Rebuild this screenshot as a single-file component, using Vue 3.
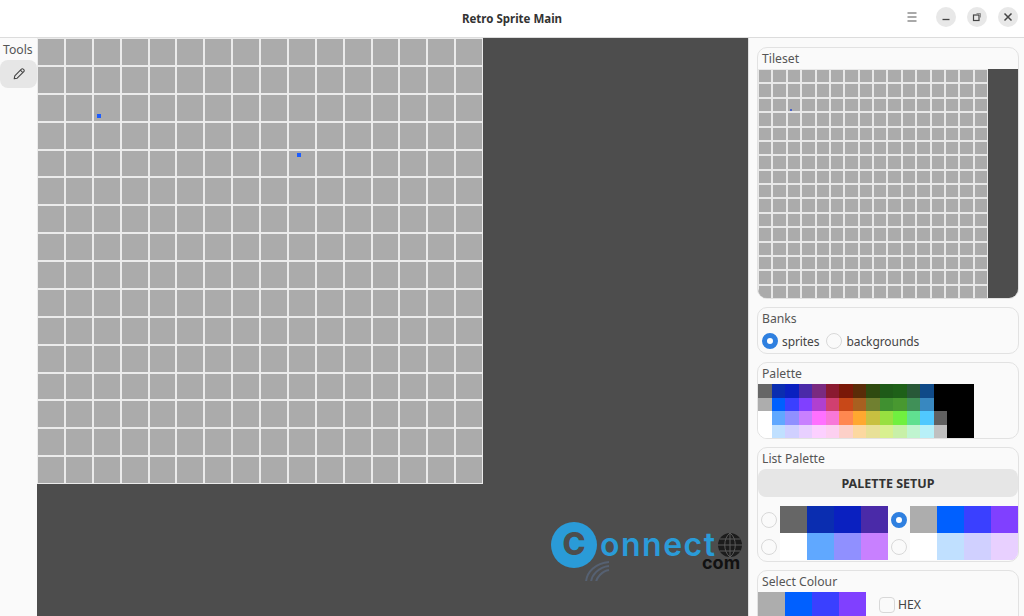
<script setup>
const cells = Array.from({ length: 256 }, (_, i) => i)
const nes = [
  '#666666','#0a2db0','#0a20c0','#4a2aa8','#7a2a80','#8a1a30','#7a1808','#5a2c08','#2f4a10','#1e5a18','#1e6018','#285838','#0f4a88','#000000','#000000','#000000',
  '#adadad','#0060ff','#3a40ff','#8040ff','#b040d0','#d04070','#c84818','#a86020','#708030','#409030','#489830','#409058','#3888c0','#000000','#000000','#000000',
  '#ffffff','#60a8ff','#9090ff','#c880ff','#ff70ff','#f878d8','#ff8850','#ffa830','#c8c040','#98e040','#70f040','#60e090','#50c8ff','#606060','#000000','#000000',
  '#ffffff','#c0e0ff','#d0d0ff','#e8d0ff','#fcd0ff','#fcd0f0','#fcd0c8','#fcd8a0','#e8e098','#d8f090','#c8f0a8','#c0f4d0','#b8f0f8','#c0c0c0','#000000','#000000'
]
const listA = ['#666666', '#0a2db0', '#0a20c0', '#4a2aa8', '#ffffff', '#60a8ff', '#9090ff', '#c880ff']
const listB = ['#adadad', '#0060ff', '#3a40ff', '#8040ff', '#ffffff', '#c0e0ff', '#d0d0ff', '#e8d0ff']
const select = ['#adadad', '#0060ff', '#3a40ff', '#8040ff']
</script>

<template>
  <div class="window">
    <header class="titlebar">
      <div class="title">Retro Sprite Main</div>
      <div class="controls">
        <svg class="menu" width="12" height="12" viewBox="0 0 12 12"><path d="M1.5 2h9M1.5 6h9M1.5 10h9" stroke="#555" stroke-width="1.1" fill="none" /></svg>
        <button class="wbtn first">
          <svg width="10" height="10" viewBox="0 0 10 10"><path d="M1.5 7.5h7" stroke="#444" stroke-width="1.3" /></svg>
        </button>
        <button class="wbtn">
          <svg width="10" height="10" viewBox="0 0 10 10"><rect x="1.5" y="3" width="5.5" height="5.5" fill="none" stroke="#444" stroke-width="1.2" /><path d="M4.5 1.5h4V5.5" fill="none" stroke="#777" stroke-width="0.8" /></svg>
        </button>
        <button class="wbtn">
          <svg width="10" height="10" viewBox="0 0 10 10"><path d="M1.5 1.5l7 7M8.5 1.5l-7 7" stroke="#444" stroke-width="1.5" /></svg>
        </button>
      </div>
    </header>

    <div class="body">
      <aside class="tools">
        <div class="tools-label">Tools</div>
        <button class="tool-btn">
          <svg width="14" height="14" viewBox="0 0 14 14"><path d="M2.2 11.8l.6-3L9.4 2.2a1.3 1.3 0 0 1 1.9 0l.5.5a1.3 1.3 0 0 1 0 1.9L5.2 11.2zM8.4 3.2l2.4 2.4" fill="none" stroke="#444" stroke-width="1.1" stroke-linejoin="round" /></svg>
        </button>
      </aside>

      <main class="stage">
        <div class="sprite-grid">
          <div v-for="c in cells" :key="c" class="sprite-cell">
            <i v-if="c === 34" class="dot dot-a"></i>
            <i v-if="c === 73" class="dot dot-b"></i>
          </div>
        </div>
        <div class="logo">
          <svg class="waves" width="26" height="20" viewBox="0 0 26 20"><path d="M2 22C2 11 12 2 25 1M7 22C7 14 15 6 25 5M12 22C12 17 18 10 25 9" fill="none" stroke="#566172" stroke-width="2" /></svg>
          <div class="logo-circle">C</div>
          <div class="logo-word">onnect</div>
          <svg class="globe" width="26" height="26" viewBox="0 0 26 26">
            <circle cx="13" cy="13" r="12" fill="#1c1c1c" />
            <path d="M1 13h24M2.5 7h21M2.5 19h21M13 1v24M13 1C6 6 6 20 13 25M13 1c7 5 7 19 0 24" fill="none" stroke="#5a5a5a" stroke-width="1" />
          </svg>
          <div class="logo-com">com</div>
        </div>
      </main>

      <aside class="panel">
        <section class="card tileset-card">
          <div class="card-title">Tileset</div>
          <div class="tileset-view">
            <div class="tile-grid">
              <div v-for="c in cells" :key="c" class="tile-cell">
                <i v-if="c === 34" class="tile-dot"></i>
              </div>
            </div>
          </div>
        </section>

        <section class="card banks-card">
          <div class="card-title">Banks</div>
          <div class="radios">
            <span class="radio on"></span><span class="radio-label">sprites</span>
            <span class="radio"></span><span class="radio-label">backgrounds</span>
          </div>
        </section>

        <section class="card palette-card">
          <div class="card-title">Palette</div>
          <div class="palette">
            <div v-for="(col, i) in nes" :key="i" :style="{ background: col }"></div>
          </div>
        </section>

        <section class="card list-card">
          <div class="card-title">List Palette</div>
          <button class="setup">PALETTE SETUP</button>
          <div class="lists">
            <div class="radio-col">
              <span class="radio"></span>
              <span class="radio"></span>
            </div>
            <div class="swatches">
              <div v-for="(col, i) in listA" :key="i" :style="{ background: col }"></div>
            </div>
            <div class="radio-col">
              <span class="radio on"></span>
              <span class="radio"></span>
            </div>
            <div class="swatches">
              <div v-for="(col, i) in listB" :key="i" :style="{ background: col }"></div>
            </div>
          </div>
        </section>

        <section class="card select-card">
          <div class="card-title">Select Colour</div>
          <div class="select-row">
            <div class="select-swatches">
              <div v-for="(col, i) in select" :key="i" :style="{ background: col }"></div>
            </div>
            <span class="check"></span>
            <span class="hex">HEX</span>
          </div>
        </section>
      </aside>
    </div>
  </div>
</template>

<style>
html, body { margin: 0; background: #fafafa; overflow: hidden; }
</style>

<style scoped>
.window {
  width: 1024px;
  height: 616px;
  display: flex;
  flex-direction: column;
  overflow: hidden;
  font-family: "Noto Sans", sans-serif;
  color: #444;
  font-size: 12.2px;
  background: #fafafa;
}
.titlebar {
  height: 37px;
  flex: none;
  display: flex;
  align-items: center;
  justify-content: center;
  position: relative;
  background: #ffffff;
  border-bottom: 1px solid #dcdcdc;
}
.title {
  font-weight: 700;
  font-size: 11.5px;
  color: #333;
}
.controls {
  position: absolute;
  right: 6px;
  top: 7px;
  display: flex;
  align-items: center;
  gap: 11px;
}
.menu { margin-right: 7px; }
.wbtn {
  width: 20px;
  height: 20px;
  border-radius: 50%;
  border: none;
  background: #e8e8e8;
  padding: 0;
  display: flex;
  align-items: center;
  justify-content: center;
}
.body {
  flex: 1;
  display: flex;
  min-height: 0;
}
.tools {
  width: 37px;
  flex: none;
  display: flex;
  flex-direction: column;
  background: #fafafa;
}
.tools-label {
  height: 22px;
  line-height: 24px;
  padding-left: 3px;
  color: #555;
}
.tool-btn {
  width: 37px;
  height: 28px;
  padding: 0;
  border: none;
  border-radius: 8px;
  background: #e6e6e6;
  display: flex;
  align-items: center;
  justify-content: center;
}
.stage {
  width: 711px;
  flex: none;
  position: relative;
  background: #4d4d4d;
}
.sprite-grid {
  width: 446px;
  height: 446px;
  box-sizing: border-box;
  padding: 1px;
  display: grid;
  grid-template-columns: repeat(16, 1fr);
  grid-template-rows: repeat(16, 1fr);
  gap: 2px;
  background: #ebebeb;
}
.sprite-cell {
  background: #ababab;
  position: relative;
}
.dot {
  position: absolute;
  width: 4px;
  height: 4px;
  background: #1b5cff;
}
.dot-a { left: 3px; top: 19px; }
.dot-b { left: 8px; top: 2px; }
.logo {
  position: absolute;
  left: 514px;
  top: 484px;
  width: 195px;
  height: 62px;
}
.logo-circle {
  position: absolute;
  left: 0;
  top: 0;
  width: 46px;
  height: 46px;
  border-radius: 50%;
  background: #2a9bd8;
  color: #4d4d4d;
  font: 800 31px/44px "Inter", sans-serif;
  text-align: center;
}
.logo-word {
  position: absolute;
  left: 49px;
  top: 13px;
  color: #2a9bd8;
  font: 600 32px/20px "Inter", sans-serif;
  letter-spacing: 1.5px;
}
.globe {
  position: absolute;
  left: 166px;
  top: 10px;
}
.logo-com {
  position: absolute;
  left: 151px;
  top: 34px;
  color: #111;
  font: 700 18px/14px "Inter", sans-serif;
}
.waves {
  position: absolute;
  left: 33px;
  top: 39px;
}
.panel {
  flex: 1;
  min-width: 0;
  padding: 9px 5px 0 8px;
  border-left: 1px solid #e0e0e0;
  display: flex;
  flex-direction: column;
  gap: 8px;
  background: #fafafa;
  overflow: hidden;
}
.card {
  flex: none;
  box-sizing: border-box;
  border: 1px solid #e2e2e2;
  border-radius: 10px;
  background: #fafafa;
  overflow: hidden;
}
.card-title {
  height: 21px;
  line-height: 22px;
  padding-left: 4px;
  color: #555;
}
.tileset-card { height: 252px; }
.tileset-view {
  height: 230px;
  background: #4d4d4d;
}
.tile-grid {
  width: 230px;
  height: 230px;
  box-sizing: border-box;
  padding: 1px;
  display: grid;
  grid-template-columns: repeat(16, 1fr);
  grid-template-rows: repeat(16, 1fr);
  gap: 2px;
  background: #e8e8e8;
}
.tile-cell {
  background: #ababab;
  position: relative;
}
.tile-dot {
  position: absolute;
  left: 2px;
  top: 10px;
  width: 2px;
  height: 2px;
  background: #4a62c8;
}
.banks-card { height: 47px; }
.radios {
  display: flex;
  align-items: center;
  padding-left: 4px;
  height: 24px;
}
.radio-label {
  margin: 0 7px 0 4px;
  font-size: 12px;
  letter-spacing: -0.08px;
}
.radio {
  flex: none;
  box-sizing: border-box;
  width: 16px;
  height: 16px;
  border-radius: 50%;
  border: 1px solid #d8d8d8;
  background: #fafafa;
  display: block;
}
.radio.on {
  border: 5px solid #2f80e0;
  background: #ffffff;
}
.palette-card { height: 77px; }
.palette {
  width: 216px;
  height: 54px;
  display: grid;
  grid-template-columns: repeat(16, 1fr);
  grid-template-rows: repeat(4, 1fr);
}
.list-card { height: 115px; }
.setup {
  display: block;
  width: 100%;
  height: 28px;
  padding: 0;
  border: none;
  border-radius: 8px;
  background: #e6e6e6;
  color: #333;
  font: 700 12.5px "Noto Sans", sans-serif;
}
.lists {
  margin-top: 9px;
  display: flex;
  height: 54px;
}
.radio-col {
  width: 22px;
  flex: none;
  display: flex;
  flex-direction: column;
  align-items: center;
  justify-content: space-around;
}
.swatches {
  width: 108px;
  flex: none;
  display: grid;
  grid-template-columns: repeat(4, 1fr);
  grid-template-rows: repeat(2, 1fr);
}
.select-card { height: 70px; }
.select-row {
  display: flex;
  align-items: flex-start;
}
.select-swatches {
  display: grid;
  grid-template-columns: repeat(4, 27px);
  height: 27px;
}
.check {
  box-sizing: border-box;
  width: 16px;
  height: 16px;
  margin: 5px 3px 0 13px;
  border: 1px solid #d8d8d8;
  border-radius: 4px;
  background: #fafafa;
}
.hex {
  line-height: 26px;
}
</style>
